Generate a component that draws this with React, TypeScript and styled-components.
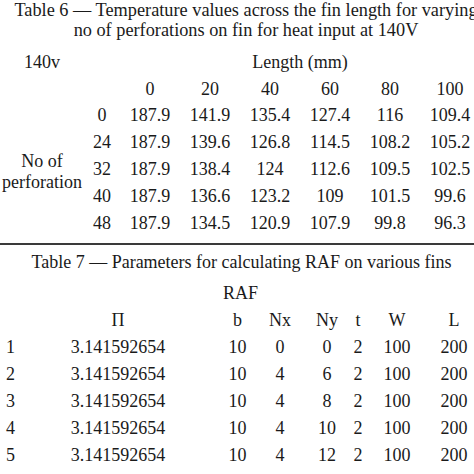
import { Fragment } from 'react';
import styled, { createGlobalStyle } from 'styled-components';

const GlobalStyle = createGlobalStyle`
  html, body {
    margin: 0;
    padding: 0;
    background: #fff;
    overflow: hidden;
  }
  body {
    width: 474px;
    height: 474px;
    font-family: 'Liberation Serif', 'Times New Roman', serif;
    color: #1a1a1a;
  }
`;

const Page = styled.div`
  width: 490px;
  display: flex;
  flex-direction: column;
`;

const Caption = styled.div<{ $width: number; $top: number; $size?: number }>`
  width: ${(p) => p.$width}px;
  margin-top: ${(p) => p.$top}px;
  font-size: ${(p) => p.$size ?? 18}px;
  line-height: 20px;
  text-align: center;
  white-space: nowrap;
`;

const Grid = styled.div<{ $cols: string; $rows: string; $top: number }>`
  display: grid;
  grid-template-columns: ${(p) => p.$cols};
  grid-template-rows: ${(p) => p.$rows};
  margin-top: ${(p) => p.$top}px;
  font-size: 18px;
`;

const Cell = styled.div<{ $align?: 'left' | 'center' | 'right'; $pl?: number; $span?: number; $col?: number }>`
  display: flex;
  align-items: center;
  justify-content: ${(p) =>
    p.$align === 'left' ? 'flex-start' : p.$align === 'right' ? 'flex-end' : 'center'};
  padding-left: ${(p) => p.$pl ?? 0}px;
  grid-column: ${(p) => (p.$col ? `${p.$col}` : `span ${p.$span ?? 1}`)};
  white-space: nowrap;
`;

const SideLabel = styled.div`
  grid-column: 1;
  grid-row: 3 / span 5;
  align-self: center;
  padding-top: 5px;
  text-align: center;
  line-height: 21px;
`;

const Rule = styled.hr`
  width: 490px;
  margin: 6px 0 0;
  border: none;
  height: 2px;
  background: #3a3a3a;
`;

const lengths = ['0', '20', '40', '60', '80', '100'];

const temps: [string, string[]][] = [
  ['0', ['187.9', '141.9', '135.4', '127.4', '116', '109.4']],
  ['24', ['187.9', '139.6', '126.8', '114.5', '108.2', '105.2']],
  ['32', ['187.9', '138.4', '124', '112.6', '109.5', '102.5']],
  ['40', ['187.9', '136.6', '123.2', '109', '101.5', '99.6']],
  ['48', ['187.9', '134.5', '120.9', '107.9', '99.8', '96.3']],
];

const rafRows = [
  ['1', '3.141592654', '10', '0', '0', '2', '100', '200'],
  ['2', '3.141592654', '10', '4', '6', '2', '100', '200'],
  ['3', '3.141592654', '10', '4', '8', '2', '100', '200'],
  ['4', '3.141592654', '10', '4', '10', '2', '100', '200'],
  ['5', '3.141592654', '10', '4', '12', '2', '100', '200'],
];

// left padding per column of table 7, to shift the centred values
const rafPad = [6, 0, 20, 0, 10, 0, 0, 0];

export default function App() {
  return (
    <Page>
      <GlobalStyle />
      <Caption $width={492} $top={0} $size={18.3}>
        Table 6 — Temperature values across the fin length for varying
        <br />
        no of perforations on fin for heat input at 140V
      </Caption>

      <Grid $cols="84px 36px repeat(6, 60px)" $rows="28px 26px repeat(5, 27px)" $top={8}>
        <Cell>140v</Cell>
        <Cell />
        <Cell $span={6}>Length (mm)</Cell>

        <Cell />
        <Cell />
        {lengths.map((l) => (
          <Cell key={l}>{l}</Cell>
        ))}

        <SideLabel>
          No of
          <br />
          perforation
        </SideLabel>
        {temps.map(([n, values]) => (
          <Fragment key={n}>
            <Cell $col={2}>{n}</Cell>
            {values.map((v, i) => (
              <Cell key={i}>{v}</Cell>
            ))}
          </Fragment>
        ))}
      </Grid>

      <Rule />

      <Caption $width={483} $top={7}>
        Table 7 — Parameters for calculating RAF on various fins
      </Caption>

      <Grid $cols="40px 156px 63px 42px 42px 30px 48px 66px" $rows="repeat(7, 27px)" $top={8}>
        <Cell $span={8} style={{ paddingRight: 6 }}>RAF</Cell>

        {['', 'Π', 'b', 'Nx', 'Ny', 't', 'W', 'L'].map((h, i) => (
          <Cell key={`h${i}`} $align={i === 0 ? 'left' : 'center'} $pl={rafPad[i]}>
            {h}
          </Cell>
        ))}

        {rafRows.map((row) =>
          row.map((v, i) => (
            <Cell key={`${row[0]}-${i}`} $align={i === 0 ? 'left' : 'center'} $pl={rafPad[i]}>
              {v}
            </Cell>
          )),
        )}
      </Grid>
    </Page>
  );
}
